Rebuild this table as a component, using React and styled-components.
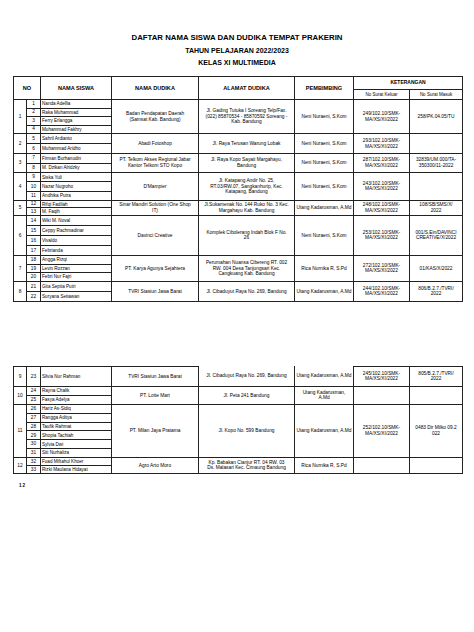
import React from "react";
import styled, { createGlobalStyle } from "styled-components";

const GlobalStyle = createGlobalStyle`
  html, body { margin: 0; padding: 0; background: #fff; }
  body { font-family: "Liberation Sans", Arial, sans-serif; color: #000; }
`;

const Page = styled.div`
  width: 474px;
  height: 632px;
  overflow: hidden;
  display: flex;
  flex-direction: column;
`;

const Heading = styled.div`
  padding-top: 31px;
  display: flex;
  flex-direction: column;
  align-items: center;
`;

const TitleLine = styled.div`
  font-weight: bold;
  font-size: ${(p) => p.$size || 7}px;
  line-height: ${(p) => p.$lh || 12}px;
  white-space: nowrap;
`;

const Sheet = styled.table`
  margin: ${(p) => p.$top}px 0 0 13px;
  width: 449px;
  table-layout: fixed;
  border-collapse: collapse;
  border: ${(p) => (p.$outer ? "1.5px solid #000" : "none")};
  font-size: 4.8px;
  line-height: 1.15;
`;

const Row = styled.tr`
  height: ${(p) => p.$h}px;
`;

const HeadCell = styled.th`
  border: 1px solid #222;
  font-weight: ${(p) => (p.$light ? "normal" : "bold")};
  font-size: ${(p) => p.$size || 5.6}px;
  padding: 0;
  text-align: center;
  vertical-align: middle;
  white-space: nowrap;
`;

const Cell = styled.td`
  border: 1px solid #222;
  ${(p) => p.$noTop && "border-top-style: hidden;"}
  padding: 0 1px;
  text-align: center;
  vertical-align: middle;
  white-space: nowrap;
  overflow: hidden;
`;

const NameCell = styled(Cell)`
  text-align: left;
  border-width: 1.3px;
  font-size: 4.6px;
`;

const Footer = styled.div`
  margin: 9px 0 0 19px;
  font-size: 4.6px;
  font-weight: bold;
  letter-spacing: 1px;
`;

const widths = [13, 14, 71, 87, 96, 59, 56, 53];

const kel = (n) => `${n}/102.10/SMK-MA/XS/XI/2022`;

const table1 = [
  {
    no: 1, h: 8.5,
    students: [[1, "Nanda Adellia"], [2, "Raka Muhammad"], [3, "Ferry Erlangga"], [4, "Muhammad Fakhry"]],
    dudika: ["Badan Pendapatan Daerah", "(Samsat Kab. Bandung)"],
    alamat: ["Jl. Gading Tutuka I Soreang Telp/Fax.", "(022) 85870534 - 85870592 Soreang -", "Kab. Bandung"],
    pembimbing: ["Neni Nuraeni, S.Kom"],
    keluar: kel(249), masuk: ["258/PK.04.05/TU"],
  },
  {
    no: 2, h: 10,
    students: [[5, "Sahril Ardianto"], [6, "Muhammad Aridho"]],
    dudika: ["Abadi Fotoshop"],
    alamat: ["Jl. Raya Terusan Warung Lobak"],
    pembimbing: ["Neni Nuraeni, S.Kom"],
    keluar: kel(293), masuk: [],
  },
  {
    no: 3, h: 9.5,
    students: [[7, "Firman Burhanudin"], [8, "M. Dzikan Alridzky"]],
    dudika: ["PT. Telkom Akses Regional Jabar", "Kantor Telkom STO Kopo"],
    alamat: ["Jl. Raya Kopo Sayati Margahayu,", "Bandung"],
    pembimbing: ["Neni Nuraeni, S.Kom"],
    keluar: kel(287), masuk: ["32839/UM.000/TA-", "350300/11-2022"],
  },
  {
    no: 4, h: 9.33,
    students: [[9, "Siska Yuli"], [10, "Nazar Nugroho"], [11, "Andhika Putra"]],
    dudika: ["D'Mampier"],
    alamat: ["Jl. Katapang Andir No. 25,", "RT.03/RW.07, Sangkanhurip, Kec.", "Katapang, Bandung"],
    pembimbing: ["Neni Nuraeni, S.Kom"],
    keluar: kel(243), masuk: [],
  },
  {
    no: 5, h: 7.5,
    students: [[12, "Rifqi Fadilah"], [13, "M. Faqih"]],
    dudika: ["Sinar Mandiri Solution (One Shop", "IT)"],
    alamat: ["Jl.Sukamenak No. 144 Ruko No. 3 Kec.", "Margahayu Kab. Bandung"],
    pembimbing: ["Utang Kadarusman, A.Md"],
    keluar: kel(248), masuk: ["108/SB/SMS/X/", "2022"],
  },
  {
    no: 6, h: 10,
    students: [[14, "Wiki M. Noval"], [15, "Ceppy Rachmadinar"], [16, "Vivaldo"], [17, "Febrianda"]],
    dudika: ["Davinci Creative"],
    alamat: ["Komplek Cibolerang Indah Blok F No.", "26"],
    pembimbing: ["Neni Nuraeni, S.Kom"],
    keluar: kel(253), masuk: ["001/S.Ein/DAVINCI", "CREATIVE/X/2022"],
  },
  {
    no: 7, h: 8.67,
    students: [[18, "Angga Rizqi"], [19, "Levin Rozzan"], [20, "Febri Nur Fajri"]],
    dudika: ["PT. Karya Agunya Sejahtera"],
    alamat: ["Perumahan Nuansa Cibereng RT. 002", "RW. 004 Desa Tanjungsari Kec.", "Cangkuang Kab. Bandung"],
    pembimbing: ["Rica Nurnika R, S.Pd"],
    keluar: kel(272), masuk: ["01/KAS/X/2022"],
  },
  {
    no: 8, h: 10,
    students: [[21, "Gita Septia Putri"], [22, "Suryana Setiawan"]],
    dudika: ["TVRI Stasiun Jawa Barat"],
    alamat: ["Jl. Cibaduyut Raya No. 269, Bandung"],
    pembimbing: ["Utang Kadarusman, A.Md"],
    keluar: kel(244), masuk: ["806/B.2.7./TVRI/", "2022"],
  },
];

const table2 = [
  {
    no: 9, h: 20, open: true,
    students: [[23, "Silvia Nur Rahman"]],
    dudika: ["TVRI Stasiun Jawa Barat"],
    alamat: ["Jl. Cibaduyut Raya No. 269, Bandung"],
    pembimbing: ["Utang Kadarusman, A.Md"],
    keluar: kel(245), masuk: ["805/B.2.7./TVRI/", "2022"],
  },
  {
    no: 10, h: 9,
    students: [[24, "Rayna Chalik"], [25, "Fasya Adelya"]],
    dudika: ["PT. Lotte Mart"],
    alamat: ["Jl. Peta 241 Bandung"],
    pembimbing: ["Utang Kadarusman,", "A.Md"],
    keluar: null, masuk: [],
  },
  {
    no: 11, h: 8.83,
    students: [[26, "Hariz As-Sidiq"], [27, "Rangga Aditya"], [28, "Taufik Rahmat"], [29, "Shopia Tachiah"], [30, "Sylvia Dwi"], [31, "Siti Nurhaliza"]],
    dudika: ["PT. Milan Jaya Pratama"],
    alamat: ["Jl. Kopo No. 599 Bandung"],
    pembimbing: ["Utang Kadarusman, A.Md"],
    keluar: kel(252), masuk: ["0483 Dir Milko 09.2", "022"],
  },
  {
    no: 12, h: 8,
    students: [[32, "Fuad Miftahul Khoer"], [33, "Rizki Maulana Hidayat"]],
    dudika: ["Agro Arto Moro"],
    alamat: ["Kp. Babakan Cianjur RT. 04 RW. 03", "Ds. Malasari Kec. Cimaung Bandung"],
    pembimbing: ["Rica Nurnika R, S.Pd"],
    keluar: null, masuk: [],
  },
];

function Lines({ items }) {
  return items.map((t, i) => (
    <React.Fragment key={i}>
      {i > 0 && <br />}
      {t}
    </React.Fragment>
  ));
}

function splitKeluar(k) {
  if (!k) return [];
  const at = k.indexOf("SMK-") + 4;
  return [k.slice(0, at), k.slice(at)];
}

function Group({ g }) {
  const n = g.students.length;
  return g.students.map(([num, name], i) => (
    <Row key={num} $h={g.h}>
      {i === 0 && <Cell rowSpan={n}>{g.no}</Cell>}
      <Cell>{num}</Cell>
      <NameCell>{name}</NameCell>
      {i === 0 && (
        <>
          <Cell rowSpan={n}><Lines items={g.dudika} /></Cell>
          <Cell rowSpan={n} $noTop={g.open}><Lines items={g.alamat} /></Cell>
          <Cell rowSpan={n} $noTop={g.open}><Lines items={g.pembimbing} /></Cell>
          <Cell rowSpan={n}><Lines items={splitKeluar(g.keluar)} /></Cell>
          <Cell rowSpan={n}><Lines items={g.masuk} /></Cell>
        </>
      )}
    </Row>
  ));
}

function Cols() {
  return (
    <colgroup>
      {widths.map((w, i) => <col key={i} style={{ width: w }} />)}
    </colgroup>
  );
}

export default function App() {
  return (
    <>
      <GlobalStyle />
      <Page>
        <Heading>
          <TitleLine $size={7.8} $lh={14}>DAFTAR NAMA SISWA DAN DUDIKA TEMPAT PRAKERIN</TitleLine>
          <TitleLine $size={7}>TAHUN PELAJARAN 2022/2023</TitleLine>
          <TitleLine $size={7}>KELAS XI MULTIMEDIA</TitleLine>
        </Heading>

        <Sheet $top={7} $outer>
          <Cols />
          <thead>
            <Row $h={13}>
              <HeadCell colSpan={2} rowSpan={2}>NO</HeadCell>
              <HeadCell rowSpan={2}>NAMA SISWA</HeadCell>
              <HeadCell rowSpan={2}>NAMA DUDIKA</HeadCell>
              <HeadCell rowSpan={2}>ALAMAT DUDIKA</HeadCell>
              <HeadCell rowSpan={2}>PEMBIMBING</HeadCell>
              <HeadCell colSpan={2} $size={5}>KETERANGAN</HeadCell>
            </Row>
            <Row $h={10}>
              <HeadCell $size={4.5} $light>No Surat Keluar</HeadCell>
              <HeadCell $size={4.5} $light>No Surat Masuk</HeadCell>
            </Row>
          </thead>
          <tbody>
            {table1.map((g) => <Group key={g.no} g={g} />)}
          </tbody>
        </Sheet>

        <Sheet $top={64}>
          <Cols />
          <tbody>
            {table2.map((g) => <Group key={g.no} g={g} />)}
          </tbody>
        </Sheet>

        <Footer>12</Footer>
      </Page>
    </>
  );
}
